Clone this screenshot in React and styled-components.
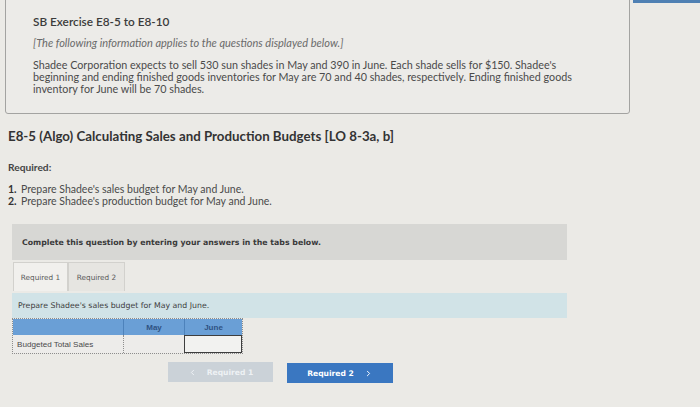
import React from "react";
import styled, { createGlobalStyle } from "styled-components";
import { ChevronLeft, ChevronRight } from "lucide-react";

const GlobalStyle = createGlobalStyle`
  html, body {
    margin: 0;
    padding: 0;
    background: #ebeae6;
    overflow: hidden;
  }
  body {
    font-family: Lato, "Open Sans", sans-serif;
    color: #3a3a3a;
  }
`;

const Page = styled.div`
  width: 700px;
  height: 407px;
  overflow: hidden;
`;

const TopRow = styled.div`
  display: flex;
  align-items: flex-start;
  margin-top: -6px;
`;

const InfoBox = styled.div`
  margin-left: 5px;
  width: 596px;
  padding: 20px 0 18px 27px;
  border: 1px solid #a3a3a1;
  border-radius: 3px;
  background: #ecebe8;
`;

const TopAccent = styled.div`
  flex: 1;
  margin: 6px 0 0 3px;
  height: 3px;
  background: #4f80b3;
`;

const BoxTitle = styled.div`
  font-size: 11.8px;
  line-height: 14px;
  font-weight: 600;
  color: #3b3b3b;
`;

const Note = styled.div`
  margin-top: 8px;
  font-size: 11px;
  line-height: 12px;
  font-style: italic;
  color: #6a6a6a;
`;

const Para = styled.p`
  margin: 10px 0 0;
  font-size: 10.75px;
  line-height: 12px;
  color: #4a4a4a;
  white-space: nowrap;
`;

const Main = styled.div`
  padding-left: 8px;
`;

const Heading = styled.h2`
  margin: 14px 0 0;
  font-size: 13.3px;
  line-height: 16px;
  font-weight: 700;
  color: #333;
`;

const Label = styled.div`
  margin-top: 17px;
  font-size: 10.2px;
  line-height: 12px;
  font-weight: 700;
  color: #444;
`;

const List = styled.ol`
  margin: 10px 0 0;
  padding: 0;
  list-style: none;
`;

const Item = styled.li`
  display: flex;
  font-size: 10.5px;
  line-height: 12px;
  color: #4a4a4a;
  b {
    width: 13px;
    color: #333;
  }
`;

const Work = styled.div`
  margin: 17px 0 0 4px;
  width: 555px;
  font-family: "DejaVu Sans", Verdana, sans-serif;
`;

const Instruction = styled.div`
  height: 36px;
  display: flex;
  align-items: center;
  padding-left: 10px;
  background: #d7d7d4;
  font-size: 7.8px;
  font-weight: 700;
  color: #3a3a3a;
`;

const Tabs = styled.div`
  display: flex;
  margin-top: 2px;
`;

const Tab = styled.div`
  width: ${(p) => p.$w}px;
  height: 29px;
  display: flex;
  align-items: center;
  justify-content: center;
  box-sizing: border-box;
  border: 1px solid #d2d1cd;
  border-bottom: none;
  background: ${(p) => (p.$active ? "#f1f0ed" : "#e6e5e1")};
  font-size: 7.3px;
  color: #5a5a5a;
  margin-left: ${(p) => (p.$first ? "1px" : "0")};
`;

const Prompt = styled.div`
  margin-top: 2px;
  height: 25px;
  display: flex;
  align-items: center;
  padding-left: 6px;
  background: #d1e3e7;
  font-size: 7.8px;
  color: #3d3d3d;
`;

const Table = styled.div`
  width: 231px;
  box-sizing: border-box;
  border: 1px dotted #8d8d8d;
  font-family: "Liberation Sans", Arial, sans-serif;
`;

const Row = styled.div`
  display: grid;
  grid-template-columns: 110px 61px 1fr;
  height: ${(p) => p.$h}px;
  background: ${(p) => (p.$head ? "#6a9fd6" : "#edecea")};
`;

const HeadCell = styled.div`
  display: flex;
  align-items: center;
  justify-content: center;
  border-left: ${(p) => (p.$first ? "none" : "1px solid #4d82bb")};
  font-size: 8px;
  font-weight: 700;
  color: #2f5283;
`;

const Cell = styled.div`
  display: flex;
  align-items: center;
  padding-left: ${(p) => (p.$label ? "4px" : "0")};
  border-left: ${(p) => (p.$first ? "none" : "1px dotted #8d8d8d")};
  box-sizing: border-box;
  font-size: 8.1px;
  color: #4a4a4a;
  ${(p) => p.$focus && "border: 1px solid #3e3e3e; background: #f2f2f0;"}
`;

const Buttons = styled.div`
  display: flex;
  gap: 14px;
  margin: 8px 0 0 156px;
`;

const NavButton = styled.div`
  width: ${(p) => p.$w}px;
  height: 20px;
  margin-top: ${(p) => (p.$primary ? "1px" : "0")};
  display: flex;
  align-items: center;
  justify-content: center;
  gap: 10px;
  background: ${(p) => (p.$primary ? "#3a77c1" : "#cbd2d8")};
  color: ${(p) => (p.$primary ? "#ffffff" : "#eef1f4")};
  font-size: 7.6px;
  font-weight: 700;
`;

export default function App() {
  return (
    <Page>
      <GlobalStyle />
      <TopRow>
        <InfoBox>
          <BoxTitle>SB Exercise E8-5 to E8-10</BoxTitle>
          <Note>[The following information applies to the questions displayed below.]</Note>
          <Para>
            Shadee Corporation expects to sell 530 sun shades in May and 390 in June. Each shade sells for $150. Shadee's
            <br />
            beginning and ending finished goods inventories for May are 70 and 40 shades, respectively. Ending finished goods
            <br />
            inventory for June will be 70 shades.
          </Para>
        </InfoBox>
        <TopAccent />
      </TopRow>

      <Main>
        <Heading>E8-5 (Algo) Calculating Sales and Production Budgets [LO 8-3a, b]</Heading>
        <Label>Required:</Label>
        <List>
          <Item>
            <b>1.</b> Prepare Shadee's sales budget for May and June.
          </Item>
          <Item>
            <b>2.</b> Prepare Shadee's production budget for May and June.
          </Item>
        </List>

        <Work>
          <Instruction>Complete this question by entering your answers in the tabs below.</Instruction>
          <Tabs>
            <Tab $w={55} $active $first>Required 1</Tab>
            <Tab $w={57}>Required 2</Tab>
          </Tabs>
          <Prompt>Prepare Shadee's sales budget for May and June.</Prompt>
          <Table>
            <Row $head $h={16}>
              <HeadCell $first />
              <HeadCell>May</HeadCell>
              <HeadCell>June</HeadCell>
            </Row>
            <Row $h={18}>
              <Cell $label $first>Budgeted Total Sales</Cell>
              <Cell />
              <Cell $focus />
            </Row>
          </Table>
          <Buttons>
            <NavButton $w={105}>
              <ChevronLeft size={9} strokeWidth={2.5} />
              <span>Required 1</span>
            </NavButton>
            <NavButton $w={106} $primary>
              <span>Required 2</span>
              <ChevronRight size={9} strokeWidth={2.5} />
            </NavButton>
          </Buttons>
        </Work>
      </Main>
    </Page>
  );
}
